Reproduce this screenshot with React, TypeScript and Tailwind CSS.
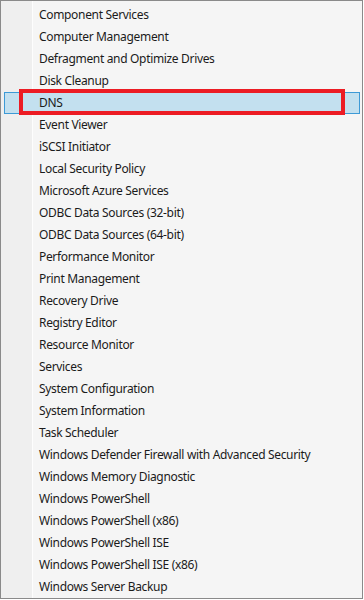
import React from 'react';

const tools = [
  'Component Services',
  'Computer Management',
  'Defragment and Optimize Drives',
  'Disk Cleanup',
  'DNS',
  'Event Viewer',
  'iSCSI Initiator',
  'Local Security Policy',
  'Microsoft Azure Services',
  'ODBC Data Sources (32-bit)',
  'ODBC Data Sources (64-bit)',
  'Performance Monitor',
  'Print Management',
  'Recovery Drive',
  'Registry Editor',
  'Resource Monitor',
  'Services',
  'System Configuration',
  'System Information',
  'Task Scheduler',
  'Windows Defender Firewall with Advanced Security',
  'Windows Memory Diagnostic',
  'Windows PowerShell',
  'Windows PowerShell (x86)',
  'Windows PowerShell ISE',
  'Windows PowerShell ISE (x86)',
  'Windows Server Backup',
];

function MenuRow({ label, selected }: { label: string; selected?: boolean }) {
  if (selected) {
    return (
      <div className="relative ml-[3px] mr-[2px] flex h-[22px] items-center border border-[#3d9ad6] bg-[#c3e0ef] pl-[34px]">
        <span>{label}</span>
        <div className="pointer-events-none absolute left-[14px] top-[-4px] h-[26px] w-[326px] border-[4px] border-[#ec1c24]" />
      </div>
    );
  }
  return (
    <div className="flex h-[22px] items-center pl-[38px]">
      <span>{label}</span>
    </div>
  );
}

export default function App() {
  return (
    <div className="h-[600px] w-[364px] bg-white">
      <div
        className="h-[599px] w-[363px] overflow-hidden border border-[#8a8a8a] bg-[linear-gradient(to_right,#efefef_31px,#fdfdfd_31px,#fdfdfd_32px,#f5f5f5_32px)] pt-[3px] text-[12px] tracking-[-0.33px] text-[#1b1b1b]"
        style={{ fontFamily: '"Noto Sans", "Open Sans", sans-serif' }}
      >
        {tools.map((t) => (
          <MenuRow key={t} label={t} selected={t === 'DNS'} />
        ))}
      </div>
    </div>
  );
}
